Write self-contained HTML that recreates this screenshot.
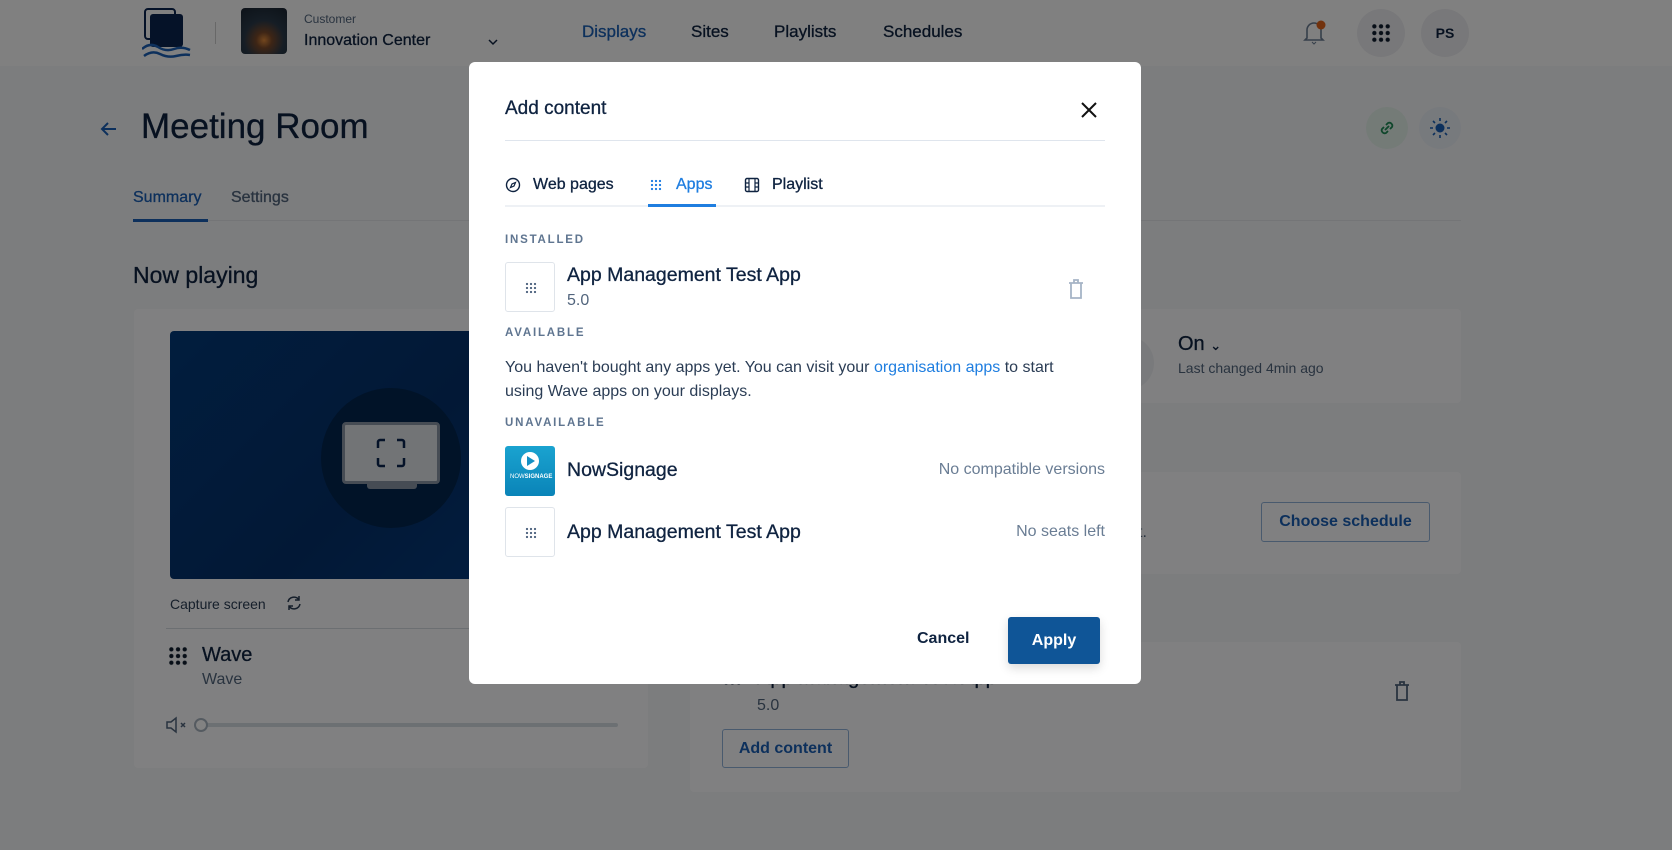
<!DOCTYPE html>
<html><head><meta charset="utf-8"><style>
*{box-sizing:border-box;margin:0;padding:0}
body{width:1672px;height:850px;overflow:hidden;background:#f4f5f7;font-family:"Liberation Sans",sans-serif;color:#0f2340;position:relative}
.a{position:absolute;white-space:nowrap}
.hdr{position:absolute;left:0;top:0;width:1672px;height:66px;background:#fbfbfb}
.card{position:absolute;background:#fbfcfd;border-radius:4px}
.ov{position:absolute;left:0;top:0;width:1672px;height:850px;background:rgba(0,0,0,.49)}
.modal{position:absolute;left:469px;top:62px;width:672px;height:622px;background:#fff;border-radius:6px}
.lbl{position:absolute;font-size:11.5px;font-weight:700;letter-spacing:1.8px;color:#5f7590}
.box{position:absolute;width:50px;height:50px;border:1px solid #dfe4ea;border-radius:3px}
.dots{position:absolute;left:19px;top:19px;width:12px;height:12px;background-image:radial-gradient(circle,#5a6e88 1.1px,transparent 1.3px);background-size:4px 4px}
.md{-webkit-text-stroke:0.3px currentColor}
</style></head><body>
<div class="hdr"></div>
<svg class="a" style="left:142px;top:8px" width="52" height="50" viewBox="0 0 52 50"><rect x="3" y="1" width="30" height="30" rx="3" fill="none" stroke="#0b2550" stroke-width="2"/><rect x="8" y="6" width="33" height="33" rx="3" fill="#0b2550"/><path d="M0 41 Q8 34 16 39 T32 41 T48 42" stroke="#1a5fb4" stroke-width="2.5" fill="none"/><path d="M2 48 Q10 42 18 46 T34 48 T48 47" stroke="#1a5fb4" stroke-width="2.5" fill="none"/></svg>
<div class="a" style="left:215px;top:22px;width:1px;height:22px;background:#ccc"></div>
<div class="a" style="left:241px;top:8px;width:46px;height:46px;border-radius:4px;background:radial-gradient(circle at 50% 70%,#e08a3a 0,#7a4a2a 20%,#2b3a4a 50%,#1a2430 100%)"></div>
<div class="a" style="left:304px;top:12px;font-size:12px;color:#52657d">Customer</div>
<div class="a md" style="left:304px;top:32px;font-size:16px;color:#0f2340">Innovation Center</div>
<svg class="a" style="left:487px;top:37px" width="12" height="10"><path d="M2 3l4 4 4-4" stroke="#0f2340" stroke-width="1.5" fill="none"/></svg>
<div class="a md" style="left:582px;top:22px;font-size:17px;color:#1a5fb4">Displays</div>
<div class="a md" style="left:691px;top:22px;font-size:17px">Sites</div>
<div class="a md" style="left:774px;top:22px;font-size:17px">Playlists</div>
<div class="a md" style="left:883px;top:22px;font-size:17px">Schedules</div>
<svg class="a" style="left:1301px;top:18px" width="26" height="28"><path d="M6 20V12a7 7 0 0 1 14 0v8l2 2H4z" fill="none" stroke="#6b7c92" stroke-width="1.6"/><path d="M11 24l2 2 2-2" stroke="#6b7c92" fill="none"/><circle cx="20" cy="7" r="4.5" fill="#e0621a"/></svg>
<div class="a" style="left:1357px;top:9px;width:48px;height:48px;border-radius:50%;background:#ececef"></div>
<div class="a" style="left:1371px;top:23px;width:20px;height:20px;background-image:radial-gradient(circle,#0f1c2e 2px,transparent 2.3px);background-size:6.7px 6.7px"></div>
<div class="a" style="left:1421px;top:9px;width:48px;height:48px;border-radius:50%;background:#ececef;font-size:14px;font-weight:700;text-align:center;line-height:48px">PS</div>

<svg class="a" style="left:99px;top:120px" width="20" height="18"><path d="M17 9H3M9 3L3 9l6 6" stroke="#1a5fb4" stroke-width="2" fill="none"/></svg>
<div class="a md" style="left:141px;top:107px;font-size:35px;color:#0f2340">Meeting Room</div>
<div class="a" style="left:1366px;top:107px;width:42px;height:42px;border-radius:50%;background:#e3f1ea"></div>
<svg class="a" style="left:1377px;top:118px" width="20" height="20"><path d="M8 12l4-4M7 9l-2 2a3 3 0 0 0 4 4l2-2M13 11l2-2a3 3 0 0 0-4-4l-2 2" stroke="#1f8a55" stroke-width="1.8" fill="none"/></svg>
<div class="a" style="left:1419px;top:107px;width:42px;height:42px;border-radius:50%;background:#eaeff6"></div>
<svg class="a" style="left:1429px;top:117px" width="22" height="22"><circle cx="11" cy="11" r="4.5" fill="#1a5fb4"/><g stroke="#1a5fb4" stroke-width="1.6"><path d="M11 1v3M11 18v3M1 11h3M18 11h3M4 4l2 2M16 16l2 2M4 18l2-2M16 6l2-2"/></g></svg>
<div class="a md" style="left:133px;top:189px;font-size:16px;color:#1a5fb4">Summary</div>
<div class="a md" style="left:231px;top:189px;font-size:16px;color:#52657d">Settings</div>
<div class="a" style="left:133px;top:220px;width:1328px;height:1px;background:#e3e6ea"></div>
<div class="a" style="left:133px;top:219px;width:75px;height:3px;background:#1a5fb4"></div>
<div class="a md" style="left:133px;top:262px;font-size:23px">Now playing</div>

<div class="card" style="left:134px;top:309px;width:514px;height:459px"></div>
<div class="a" style="left:170px;top:331px;width:450px;height:248px;border-radius:4px;background:linear-gradient(135deg,#033a7a,#04306a 50%,#063f86)"></div>
<div class="a" style="left:321px;top:388px;width:140px;height:140px;border-radius:50%;background:#03264f"></div>
<div class="a" style="left:342px;top:422px;width:98px;height:62px;border:3px solid #8a96a6;border-radius:4px;background:#dfe3e8"></div>
<div class="a" style="left:367px;top:484px;width:50px;height:5px;background:#8a96a6;border-radius:0 0 3px 3px"></div>
<svg class="a" style="left:376px;top:438px" width="30" height="30"><path d="M2 10V4a2 2 0 0 1 2-2h5M21 2h5a2 2 0 0 1 2 2v6M28 20v6a2 2 0 0 1-2 2h-5M9 28H4a2 2 0 0 1-2-2v-6" stroke="#0b2550" stroke-width="2.5" fill="none"/></svg>
<div class="a" style="left:170px;top:596px;font-size:14px;color:#2b3d55">Capture screen</div>
<svg class="a" style="left:285px;top:594px" width="18" height="18"><path d="M3 8a6 6 0 0 1 11-2M15 10a6 6 0 0 1-11 2M14 2v4h-4M4 16v-4h4" stroke="#2b3d55" stroke-width="1.5" fill="none"/></svg>
<div class="a" style="left:166px;top:628px;width:450px;height:1px;background:#d5dae0"></div>
<div class="a" style="left:168px;top:646px;width:20px;height:20px;background-image:radial-gradient(circle,#0f1c2e 2px,transparent 2.3px);background-size:6.7px 6.7px"></div>
<div class="a md" style="left:202px;top:644px;font-size:20px">Wave</div>
<div class="a" style="left:202px;top:671px;font-size:16px;color:#52657d">Wave</div>
<svg class="a" style="left:165px;top:716px" width="28" height="18"><path d="M2 6h4l5-4v14l-5-4H2z" stroke="#52657d" stroke-width="1.5" fill="none"/><path d="M16 7l4 4M20 7l-4 4" stroke="#52657d" stroke-width="1.5"/></svg>
<div class="a" style="left:200px;top:723px;width:418px;height:4px;background:#d5dbe2;border-radius:2px"></div>
<div class="a" style="left:194px;top:718px;width:14px;height:14px;border-radius:50%;border:2px solid #a8b2bf;background:#fff"></div>

<div class="card" style="left:690px;top:309px;width:771px;height:94px"></div>
<div class="a" style="left:1100px;top:336px;width:54px;height:54px;border-radius:50%;background:#eef0f3"></div>
<div class="a md" style="left:1178px;top:333px;font-size:20px">On <span style="font-size:13px">⌄</span></div>
<div class="a" style="left:1178px;top:360px;font-size:14px;color:#52657d">Last changed 4min ago</div>
<div class="card" style="left:690px;top:472px;width:771px;height:102px"></div>
<div class="a" style="left:1138px;top:524px;font-size:16px;color:#52657d">t.</div>
<div class="a" style="left:1261px;top:502px;width:169px;height:40px;border:1px solid #8fb0d8;border-radius:3px;font-size:16px;font-weight:700;color:#1a5fb4;text-align:center;line-height:38px">Choose schedule</div>
<div class="card" style="left:690px;top:642px;width:771px;height:150px"></div>
<div class="a" style="left:723px;top:672px;font-size:18px;font-weight:700">•••</div>
<div class="a md" style="left:757px;top:667px;font-size:20px">App Management Test App</div>
<div class="a" style="left:757px;top:697px;font-size:16px;color:#52657d">5.0</div>
<svg class="a" style="left:1392px;top:679px" width="20" height="24"><path d="M3 6h14M8 6V3h4v3M5 6v15h10V6" stroke="#52657d" stroke-width="1.8" fill="none"/></svg>
<div class="a" style="left:722px;top:729px;width:127px;height:39px;border:1px solid #8fb0d8;border-radius:3px;font-size:16px;font-weight:700;color:#1a5fb4;text-align:center;line-height:37px">Add content</div>

<div class="ov"></div>

<div class="modal">
<div class="a md" style="left:36px;top:36px;font-size:19px;color:#0f2340">Add content</div>
<svg class="a" style="left:611px;top:39px" width="18" height="18"><path d="M2 2l14 14M16 2L2 16" stroke="#111" stroke-width="2"/></svg>
<div class="a" style="left:36px;top:78px;width:600px;height:1px;background:#dfe5ed"></div>
<svg class="a" style="left:36px;top:115px" width="16" height="16"><circle cx="8" cy="8" r="6.5" stroke="#0f2340" stroke-width="1.4" fill="none"/><path d="M10.5 5.5L9 9 5.5 10.5 7 7z" stroke="#0f2340" stroke-width="1.2" fill="none"/></svg>
<div class="a md" style="left:64px;top:114px;font-size:16px;color:#0f2340">Web pages</div>
<div class="a" style="left:181px;top:117px;width:12px;height:12px;background-image:radial-gradient(circle,#2b85e4 1.1px,transparent 1.3px);background-size:4px 4px"></div>
<div class="a md" style="left:207px;top:114px;font-size:16px;color:#1f7ee0">Apps</div>
<svg class="a" style="left:275px;top:115px" width="16" height="16"><rect x="1.5" y="1.5" width="13" height="13" rx="1.5" stroke="#0f2340" stroke-width="1.4" fill="none"/><path d="M5 1.5v13M11 1.5v13M1.5 6h3.5M1.5 10h3.5M11 6h3.5M11 10h3.5" stroke="#0f2340" stroke-width="1.2"/></svg>
<div class="a md" style="left:303px;top:114px;font-size:16px;color:#0f2340">Playlist</div>
<div class="a" style="left:36px;top:143px;width:600px;height:2px;background:#eef1f5"></div>
<div class="a" style="left:179px;top:142px;width:68px;height:3px;background:#1f7ee0"></div>

<div class="lbl" style="left:36px;top:172px">INSTALLED</div>
<div class="box" style="left:36px;top:200px"><div class="dots"></div></div>
<div class="a md" style="left:98px;top:202px;font-size:19.5px;color:#0f2340">App Management Test App</div>
<div class="a" style="left:98px;top:230px;font-size:16px;color:#52657d">5.0</div>
<svg class="a" style="left:597px;top:215px" width="20" height="24"><path d="M3 6h14M8 6V3h4v3M5 6v15h10V6" stroke="#a6b4c6" stroke-width="1.8" fill="none"/></svg>

<div class="lbl" style="left:36px;top:265px">AVAILABLE</div>
<div class="a" style="left:36px;top:294px;font-size:16px;line-height:24px;color:#2b3d55">You haven't bought any apps yet. You can visit your <span style="color:#1f7ee0">organisation apps</span> to start<br>using Wave apps on your displays.</div>

<div class="lbl" style="left:36px;top:355px">UNAVAILABLE</div>
<div class="a" style="left:36px;top:384px;width:50px;height:50px;border-radius:3px;background:linear-gradient(180deg,#1aa3d0,#0a84b8)"></div>
<div class="a" style="left:52px;top:390px;width:18px;height:18px;border-radius:50%;background:#fff"></div>
<svg class="a" style="left:57px;top:394px" width="10" height="10"><path d="M1 0l8 5-8 5z" fill="#1590c4"/></svg>
<div class="a" style="left:41px;top:412px;font-size:6px;color:#fff;letter-spacing:0">NOW<b>SIGNAGE</b></div>
<div class="a md" style="left:98px;top:397px;font-size:19.5px;color:#0f2340">NowSignage</div>
<div class="a" style="right:36px;top:399px;font-size:16px;color:#6a7d94">No compatible versions</div>
<div class="box" style="left:36px;top:445px"><div class="dots"></div></div>
<div class="a md" style="left:98px;top:459px;font-size:19.5px;color:#0f2340">App Management Test App</div>
<div class="a" style="right:36px;top:461px;font-size:16px;color:#6a7d94">No seats left</div>

<div class="a" style="left:448px;top:568px;font-size:16px;font-weight:700;color:#0f2340">Cancel</div>
<div class="a" style="left:539px;top:555px;width:92px;height:47px;border-radius:3px;background:#0f5597;box-shadow:0 4px 10px rgba(0,0,0,.15);color:#fff;font-size:16px;font-weight:700;text-align:center;line-height:47px">Apply</div>
</div>
</body></html>
